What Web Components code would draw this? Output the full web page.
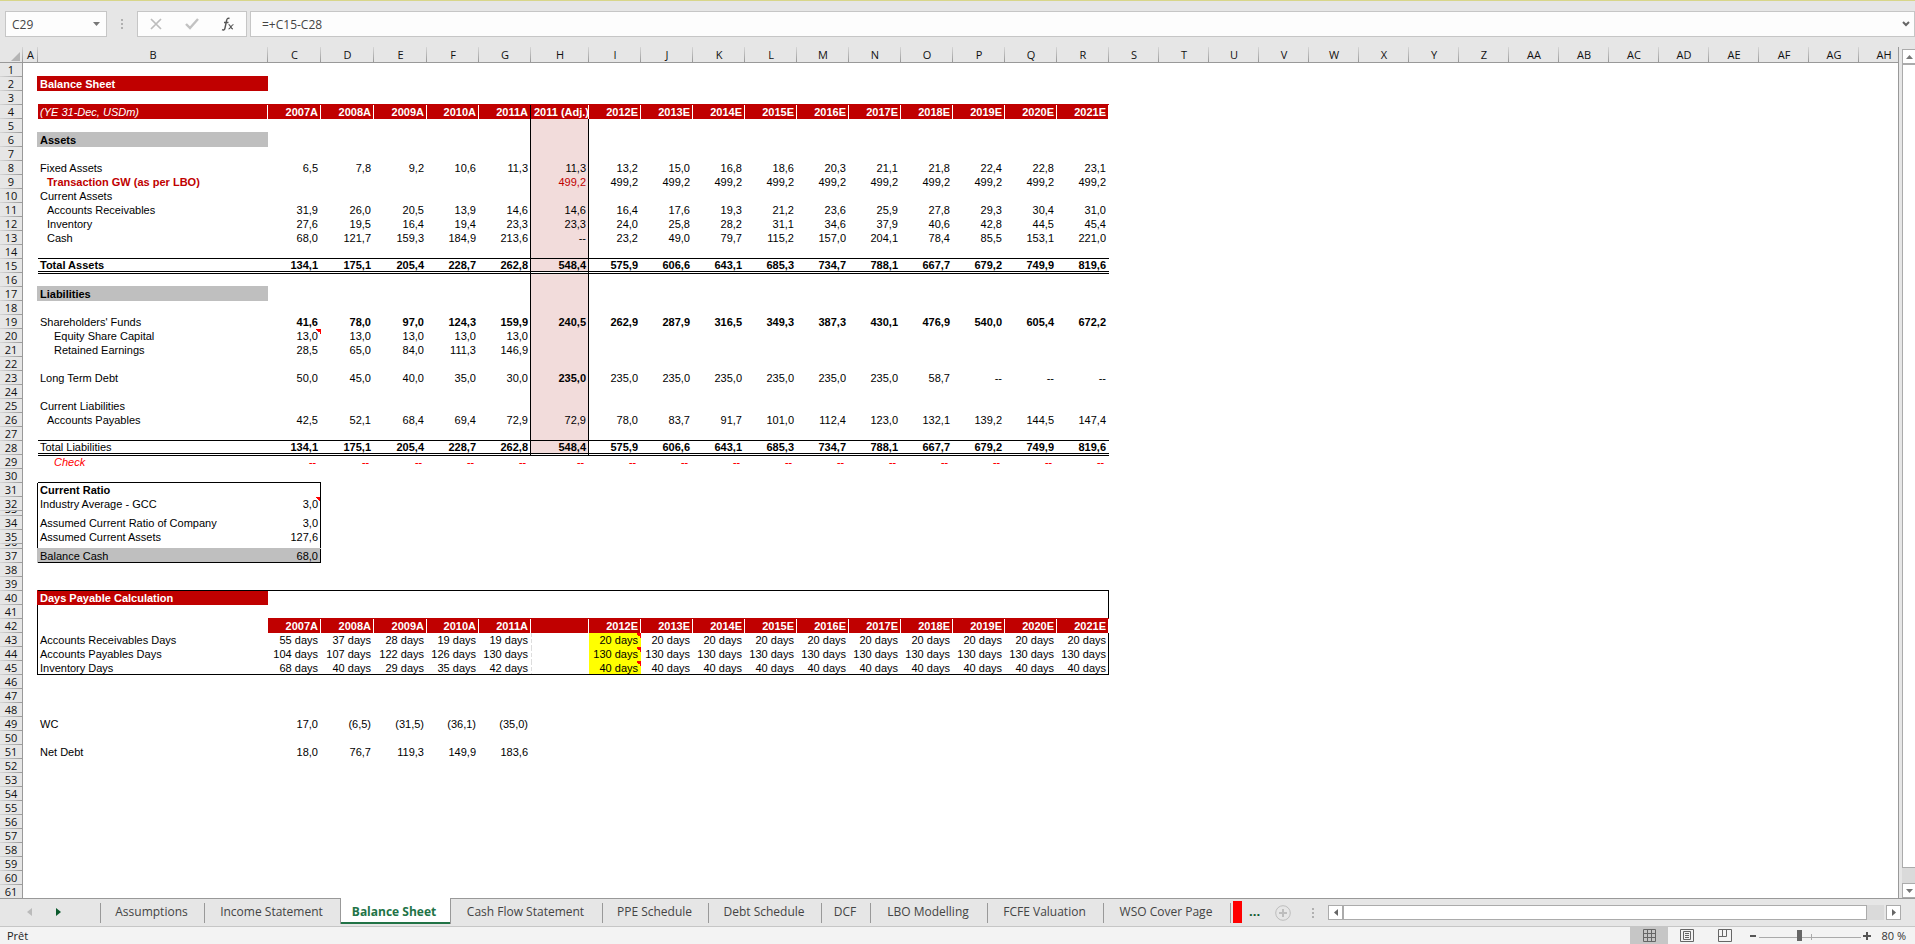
<!DOCTYPE html>
<html lang="fr">
<head>
<meta charset="utf-8">
<title>Balance Sheet</title>
<style>
  html, body { height: 100%; margin: 0; }
  body { background: #e6e6e6; font-family: "Open Sans", "Noto Sans", sans-serif; color: #444; overflow: hidden; }
</style>
</head>
<body>
<workbook-app>
  <formula-bar slot="top" cell="C29" formula="=+C15-C28"></formula-bar>
  <sheet-grid slot="sheet"></sheet-grid>
  <v-scroll slot="vscroll"></v-scroll>
  <sheet-tabs slot="tabs">
    <sheet-tab width="104">Assumptions</sheet-tab>
    <sheet-tab width="136">Income Statement</sheet-tab>
    <sheet-tab width="110" active>Balance Sheet</sheet-tab>
    <sheet-tab width="152">Cash Flow Statement</sheet-tab>
    <sheet-tab width="106">PPE Schedule</sheet-tab>
    <sheet-tab width="113">Debt Schedule</sheet-tab>
    <sheet-tab width="49">DCF</sheet-tab>
    <sheet-tab width="117">LBO Modelling</sheet-tab>
    <sheet-tab width="116">FCFE Valuation</sheet-tab>
    <sheet-tab width="127">WSO Cover Page</sheet-tab>
  </sheet-tabs>
  <status-bar slot="status">Prêt</status-bar>
</workbook-app>

<script>
const define = (name, html, setup) => customElements.define(name, class extends HTMLElement {
  constructor() {
    super();
    this.attachShadow({ mode: 'open' }).innerHTML =
      '<style>:host,*{box-sizing:border-box}button,input{font:inherit;color:inherit;margin:0;padding:0;border:0;background:none;outline:0}</style>' + html;
  }
  connectedCallback() { if (setup) setup(this, this.shadowRoot); }
});

define('workbook-app', `
<style>
  :host { display: flex; flex-direction: column; height: 100vh; }
  .mid { flex: 1; min-height: 0; display: flex; gap: 3px; }
  .sheet { flex: 1; min-width: 0; display: flex; }
</style>
<slot name="top"></slot>
<div class="mid"><div class="sheet"><slot name="sheet"></slot></div><slot name="vscroll"></slot></div>
<slot name="tabs"></slot>
<slot name="status"></slot>`);

define('formula-bar', `
<style>
  :host { display: flex; height: 47px; padding: 10px 0 10px 5px; border-top: 1px solid #d8d68a; font-size: 12px; align-items: stretch; }
  .box { display: flex; align-items: center; background: #fdfdfd; border: 1px solid #c6c6c6; }
  .name { width: 102px; padding: 0 6px; }
  .name input { flex: 1; min-width: 0; }
  .dots { width: 30px; display: grid; place-items: center; }
  .tools { width: 110px; justify-content: space-around; margin-right: 3px; }
  .tools button { display: grid; place-items: center; width: 30px; height: 22px; }
  .formula { flex: 1; padding: 0 4px 0 11px; }
  .formula input { flex: 1; min-width: 0; }
  svg { display: block; }
</style>
<div class="box name"><input aria-label="Zone Nom"><button aria-label="Noms"><svg width="7" height="5"><path d="M0 0h7L3.500 4z" fill="#777"/></svg></button></div>
<div class="dots"><svg width="2" height="10"><path d="M0 0h2v2H0zM0 4h2v2H0zM0 8h2v2H0z" fill="#b0b0b0"/></svg></div>
<div class="box tools">
  <button aria-label="Annuler"><svg width="12" height="12"><path d="M1 1l10 10M11 1L1 11" stroke="#bdbdbd" stroke-width="1.700"/></svg></button>
  <button aria-label="Entrer"><svg width="14" height="12"><path d="M1 6l4 4 8-9" fill="none" stroke="#c2c2c2" stroke-width="2.400"/></svg></button>
  <button aria-label="Insérer une fonction"><svg width="14" height="14" fill="none" stroke="#555"><path d="M8.500 1.500C6.800.7 6 1.500 5.600 3.500L4 11C3.600 13 2.500 13.300 1 12.700M3 5.500h4.500" stroke-width="1.400"/><path d="M7.500 7.500c2 0 2 4.500 4.500 4.500M12.500 7.500c-2 0-3 4.500-5 4.500" stroke-width="1.200"/></svg></button>
</div>
<div class="box formula"><input aria-label="Barre de formule"><button aria-label="Développer"><svg width="8" height="6"><path d="M1 1l3 3 3-3" fill="none" stroke="#666" stroke-width="2"/></svg></button></div>`,
(el, r) => {
  const [a, b] = r.querySelectorAll('input');
  a.value = el.getAttribute('cell');
  b.value = el.getAttribute('formula');
});

/* Column widths, in order from A to AH */
const letters = [];
for (let i = 0; i < 34; i++) letters.push(i < 26 ? String.fromCharCode(65 + i) : 'A' + String.fromCharCode(39 + i));
const widthOf = i => i === 0 ? 15 : i === 1 ? 230 : i < 5 ? 53 : i === 7 ? 58 : i < 18 ? 52 : 50;

const years = '2007A 2008A 2009A 2010A 2011A 2011_(Adj.) 2012E 2013E 2014E 2015E 2016E 2017E 2018E 2019E 2020E 2021E';
/* row: [label, label classes, values from column C ("." = empty), value classes] */
const data = {
  2: ['Balance Sheet', 'red bold'],
  4: ['(YE 31-Dec, USDm)', 'red ital sepr nol', years, 'red bold sepr'],
  6: ['Assets', 'grey bold'],
  8: ['Fixed Assets', '', '6,5 7,8 9,2 10,6 11,3 11,3 13,2 15,0 16,8 18,6 20,3 21,1 21,8 22,4 22,8 23,1'],
  9: ['Transaction GW (as per LBO)', 'bold crimson i1', '. . . . . 499,2 499,2 499,2 499,2 499,2 499,2 499,2 499,2 499,2 499,2 499,2'],
  10: ['Current Assets', ''],
  11: ['Accounts Receivables', 'i1', '31,9 26,0 20,5 13,9 14,6 14,6 16,4 17,6 19,3 21,2 23,6 25,9 27,8 29,3 30,4 31,0'],
  12: ['Inventory', 'i1', '27,6 19,5 16,4 19,4 23,3 23,3 24,0 25,8 28,2 31,1 34,6 37,9 40,6 42,8 44,5 45,4'],
  13: ['Cash', 'i1', '68,0 121,7 159,3 184,9 213,6 -- 23,2 49,0 79,7 115,2 157,0 204,1 78,4 85,5 153,1 221,0'],
  15: ['Total Assets', 'bold', '134,1 175,1 205,4 228,7 262,8 548,4 575,9 606,6 643,1 685,3 734,7 788,1 667,7 679,2 749,9 819,6', 'bold'],
  17: ['Liabilities', 'grey bold'],
  19: ["Shareholders' Funds", '', '41,6 78,0 97,0 124,3 159,9 240,5 262,9 287,9 316,5 349,3 387,3 430,1 476,9 540,0 605,4 672,2', 'bold'],
  20: ['Equity Share Capital', 'i2', '13,0 13,0 13,0 13,0 13,0'],
  21: ['Retained Earnings', 'i2', '28,5 65,0 84,0 111,3 146,9'],
  23: ['Long Term Debt', '', '50,0 45,0 40,0 35,0 30,0 235,0 235,0 235,0 235,0 235,0 235,0 235,0 58,7 -- -- --'],
  25: ['Current Liabilities', ''],
  26: ['Accounts Payables', 'i1', '42,5 52,1 68,4 69,4 72,9 72,9 78,0 83,7 91,7 101,0 112,4 123,0 132,1 139,2 144,5 147,4'],
  28: ['Total Liabilities', '', '134,1 175,1 205,4 228,7 262,8 548,4 575,9 606,6 643,1 685,3 734,7 788,1 667,7 679,2 749,9 819,6', 'bold'],
  29: ['Check', 'i2 ital bright', '-- -- -- -- -- -- -- -- -- -- -- -- -- -- -- --', 'ital bright inset'],
  31: ['Current Ratio', 'bold'],
  32: ['Industry Average - GCC', '', '3,0'],
  34: ['Assumed Current Ratio of Company', '', '3,0'],
  35: ['Assumed Current Assets', '', '127,6'],
  37: ['Balance Cash', 'grey', '68,0', 'grey'],
  40: ['Days Payable Calculation', 'red bold'],
  42: ['', '', years.replace('2011_(Adj.)', '.'), 'red bold sepr'],
  43: ['Accounts Receivables Days', '', '55 37 28 19 19 . 20 20 20 20 20 20 20 20 20 20', 'days'],
  44: ['Accounts Payables Days', '', '104 107 122 126 130 . 130 130 130 130 130 130 130 130 130 130', 'days'],
  45: ['Inventory Days', '', '68 40 29 35 42 . 40 40 40 40 40 40 40 40 40 40', 'days'],
  49: ['WC', '', '17,0 (6,5) (31,5) (36,1) (35,0)'],
  51: ['Net Debt', '', '18,0 76,7 119,3 149,9 183,6'],
};

function cell(row, c) {
  const d = data[row] || [];
  const cls = [];
  let text = '';
  if (c === 1 && d[0] !== undefined) { text = d[0]; cls.push('lab', d[1]); }
  if (c > 1 && c < 18 && d[2]) {
    const v = d[2].split(' ')[c - 2];
    if (v !== undefined) {
      const days = d[3] === 'days';
      text = v === '.' ? '' : v.replace('_', ' ') + (days ? ' days' : '');
      if (d[3]) cls.push(d[3]);
    }
  }
  const inTable = c >= 1 && c <= 17;
  if (inTable && (row === 14 || row === 27)) cls.push('bot');
  if (inTable && (row === 15 || row === 28)) cls.push('dbl');
  if (inTable && (row === 16 || row === 29)) cls.push('dbl2');
  if (c === 7 && row >= 4 && row <= 28) cls.push('left', 'right', row > 4 ? 'pink' : 'clip');
  if (c === 7 && row === 9) cls.push('crimson');
  if (c === 7 && row === 23) cls.push('bold');
  const box = (r1, r2, c1, c2) => {
    if (row < r1 || row > r2 || c < c1 || c > c2) return;
    if (row === r1) cls.push('top');
    if (row === r2) cls.push('bot');
    if (c === c1) cls.push('left');
    if (c === c2 && row !== 42) cls.push('right');
  };
  box(31, 37, 1, 2);
  box(40, 45, 1, 17);
  if (c === 7 && row >= 43 && row <= 45) cls.push('dash');
  if (c === 8 && row >= 43 && row <= 45) cls.push('yellow', 'note');
  if (c === 2 && (row === 20 || row === 32)) cls.push('note');
  const k = cls.filter(Boolean).join(' ');
  return `<td${k ? ` class="${k}"` : ''}>${text}</td>`;
}

define('sheet-grid', `
<style>
  :host { display: block; flex: 1; min-width: 0; overflow: hidden; background: linear-gradient(#e6e6e6 15px, #999 15px, #999 16px, #fff 16px); border-right: 1px solid #999; }
  table { table-layout: fixed; border-collapse: separate; border-spacing: 0; width: 0; font: 11px/14px "Liberation Sans", Arial, sans-serif; color: #000; }
  th { padding: 0; font: 11px/14px "Open Sans", "Noto Sans", sans-serif; color: #111; text-align: center; overflow: hidden; background: #e6e6e6; }
  thead th { height: 16px; line-height: 15px; border-bottom: 1px solid #999; background: linear-gradient(#d6d6d6, #999) right / 1px 100% no-repeat #e6e6e6; }
  thead th:first-child svg { display: block; margin: 4px 0 0 11px; }
  tbody th { border-right: 1px solid #999; background: linear-gradient(90deg, #d6d6d6, #999) bottom / 100% 1px no-repeat #e6e6e6; }
  tbody th div { height: 14px; line-height: 14px; overflow: hidden; }
  tr.thin th div { height: 5px; display: flex; align-items: flex-end; justify-content: center; }
  tr.thin td { height: 5px; line-height: 5px; }
  td { --t: 0 0 #0000; --b: 0 0 #0000; --l: 0 0 #0000; --r: 0 0 #0000; --f: 0 0 #0000; --g: 0 0 #0000;
       height: 14px; padding: 0 3px 0 2px; text-align: right; white-space: nowrap;
       box-shadow: var(--t), var(--l), var(--b), var(--r), var(--f), var(--g); }
  .lab { text-align: left; }
  .bold { font-weight: bold; } .ital { font-style: italic; }
  .i1 { padding-left: 9px; } .i2 { padding-left: 16px; } .inset { padding-right: 5px; }
  .red { background: #c00000; color: #fff; --f: 0 -1px #c00000; --g: -1px -1px #c00000; }
  .red.lab { --l: -1px 0 #c00000; }
  .red.sepr { --r: inset -1px 0 #fff; --g: 0 0 #0000; }
  .red.nol { --l: 0 0 #0000; }
  .grey { background: #bfbfbf; --f: 0 -1px #bfbfbf; --g: -1px -1px #bfbfbf; }
  .grey.lab { --l: -1px 0 #bfbfbf; }
  .crimson { color: #c00000; } .bright { color: #f00; }
  .pink { background-color: #f2dcdb; }
  .yellow { background: #ff0; }
  .top { --t: 0 -1px #000; } .bot { --b: inset 0 -1px #000; }
  td.left { --l: -1px 0 #000; } td.right { --r: inset -1px 0 #000; }
  td.dbl { padding-bottom: 2px; line-height: 12px; background-image: linear-gradient(#000, #000), linear-gradient(#fff, #fff); background-position: 0 12px, 0 13px; background-size: 100% 1px; background-repeat: no-repeat; }
  .dbl2 { --t: inset 0 1px #000; }
  .clip { overflow: hidden; padding-right: 0; }
  .dash { background: repeating-linear-gradient(#ddd 0 4px, #fff 4px 6px) left / 1px 100% no-repeat; }
  .note { background-image: linear-gradient(45deg, #0000 50%, #f00 50%); background-size: 5px 5px; background-position: right top; background-repeat: no-repeat; }
</style>
<table><colgroup></colgroup><thead></thead><tbody></tbody></table>`,
(el, r) => {
  r.querySelector('colgroup').innerHTML = '<col style="width:23px">' + letters.map((_, i) => `<col style="width:${widthOf(i)}px">`).join('');
  r.querySelector('thead').innerHTML = '<tr><th><svg width="9" height="9"><path d="M9 0v9H0z" fill="#b4b4b4"/></svg></th>' +
    letters.map(l => `<th scope="col">${l}</th>`).join('') + '</tr>';
  let rows = '';
  for (let n = 1; n <= 61; n++) {
    rows += `<tr${n === 33 || n === 36 ? ' class="thin"' : ''}><th scope="row"><div>${n}</div></th>` + letters.map((_, c) => cell(n, c)).join('') + '</tr>';
  }
  r.querySelector('tbody').innerHTML = rows;
});

define('v-scroll', `
<style>
  :host { display: flex; flex-direction: column; width: 13px; margin-top: 2px; background: #dadada; }
  button { height: 15px; flex: none; background: #fff; border: 1px solid #ababab; border-right: 0; display: grid; place-items: center; }
  .thumb { flex: 1; background: #fff; border: 1px solid #ababab; border-right: 0; margin-bottom: 15px; }
</style>
<button aria-label="Haut"><svg width="7" height="4"><path d="M0 4h7L3.500 0z" fill="#777"/></svg></button>
<div class="thumb"></div>
<button aria-label="Bas"><svg width="7" height="4"><path d="M0 0h7L3.500 4z" fill="#777"/></svg></button>`);

define('sheet-tab', `
<style>
  :host { display: flex; }
  button { flex: 1; text-align: center; padding-right: 3px; font-size: 12px; line-height: 26px; white-space: nowrap; height: 26px; background: linear-gradient(#999, #999) right 4px / 1px 20px no-repeat; }
  :host([active]) { margin-top: -1px; }
  :host([active]) button { background: #fff; color: #217346; font-weight: bold; margin-left: -1px; border: 1px solid #999; border-width: 0 1px; box-shadow: inset 0 -2px #217346; line-height: 28px; }
</style>
<button role="tab"><slot></slot></button>`,
el => { el.style.width = el.getAttribute('width') + 'px'; });

define('sheet-tabs', `
<style>
  :host { display: flex; height: 29px; border-top: 1px solid #999; border-bottom: 1px solid #c6c6c6; }
  .nav { width: 101px; flex: none; display: flex; align-items: center; padding: 0 40px 2px 27px; justify-content: space-between; background: linear-gradient(#999, #999) right 4px / 1px 20px no-repeat; }
  svg { display: block; }
  .tabs { display: flex; flex: none; }
  .more { display: flex; flex: none; align-items: center; }
  .mark { width: 9px; height: 22px; background: #f00; margin: 0 7px 1px 2px; }
  .dots { color: #0b5a2d; font-weight: bold; font-size: 13px; width: 25px; text-align: left; padding-bottom: 3px; }
  .plus { width: 18px; display: grid; place-items: center; }
  .grip { margin-left: 20px; }
  .h { flex: 1; min-width: 0; display: flex; height: 15px; margin: 6px 14px 0 14px; }
  .h button { flex: none; width: 15px; border: 1px solid #ababab; background: #fff; display: grid; place-items: center; }
  .track { flex: 1; display: flex; background: #dadada; margin-right: 2px; padding-right: 17px; }
  .thumb { flex: 1; background: #fff; border: 1px solid #ababab; }
</style>
<div class="nav">
  <button aria-label="Précédent"><svg width="5" height="8"><path d="M5 0v8L0 4z" fill="#bbb"/></svg></button>
  <button aria-label="Suivant"><svg width="5" height="8"><path d="M0 0v8l5-4z" fill="#0b5a2d"/></svg></button>
</div>
<div class="tabs" role="tablist"><slot></slot></div>
<div class="more">
  <span class="mark"></span><button class="dots">...</button>
  <button class="plus" aria-label="Nouvelle feuille"><svg width="16" height="16" fill="none" stroke="#bdbdbd"><circle cx="8" cy="8" r="7.300"/><path d="M8 4v8M4 8h8" stroke-width="2"/></svg></button>
  <svg class="grip" width="2" height="10"><path d="M0 0h2v2H0zM0 4h2v2H0zM0 8h2v2H0z" fill="#b0b0b0"/></svg>
</div>
<div class="h"><button aria-label="Gauche"><svg width="4" height="7"><path d="M4 0v7L0 3.500z" fill="#666"/></svg></button><div class="track"><div class="thumb"></div></div><button aria-label="Droite"><svg width="4" height="7"><path d="M0 0v7l4-3.500z" fill="#666"/></svg></button></div>`);

define('status-bar', `
<style>
  :host { display: flex; height: 17px; background: #f3f3f3; font-size: 11px; line-height: 18px; align-items: stretch; padding: 0 9px 0 7px; color: #222; overflow: hidden; }
  .msg { flex: 1; }
  .view { width: 38px; display: grid; place-items: center; }
  .on { background: #c6c6c6; }
  svg { display: block; }
  .zoom { display: flex; align-items: center; margin-left: 5px; }
  .sign { width: 8px; display: grid; place-items: center; }
  input { appearance: none; width: 102px; height: 16px; margin: 0 2px; background: linear-gradient(#aaa, #aaa) 52px 6px / 1px 6px no-repeat, linear-gradient(#aaa, #aaa) 0 9px / 100% 1px no-repeat; }
  input::-webkit-slider-thumb { appearance: none; width: 5px; height: 11px; background: #666; }
  .pct { width: 35px; text-align: right; color: #333; }
</style>
<span class="msg"><slot></slot></span>
<button class="view on" aria-label="Normal"><svg width="14" height="14" fill="none" stroke="#666"><path d="M1.500.5h12v12h-12zM5.500.5v12M9.500.5v12M1 4.500h12M1 8.500h12"/></svg></button>
<button class="view" aria-label="Mise en page"><svg width="14" height="14" fill="none" stroke="#666"><path d="M.5.5h13v12H.5zM3.500 2.500h7v8h-7zM5 4.500h4M5 6.500h4M5 8.500h4"/></svg></button>
<button class="view" aria-label="Sauts de page"><svg width="14" height="14" fill="none" stroke="#666"><path d="M.5.5h13v12H.5zM.5 7.500h8V.5M4.500.5v7"/></svg></button>
<div class="zoom"><button class="sign" aria-label="Zoom arrière"><svg width="6" height="2"><path d="M0 0h6v2H0z" fill="#555"/></svg></button>
<input type="range" min="0" max="100" value="39" aria-label="Zoom">
<button class="sign" aria-label="Zoom avant"><svg width="8" height="8"><path d="M3 0h2v8H3zM0 3h8v2H0z" fill="#555"/></svg></button>
<span class="pct">80 %</span></div>`);
</script>
</body>
</html>
